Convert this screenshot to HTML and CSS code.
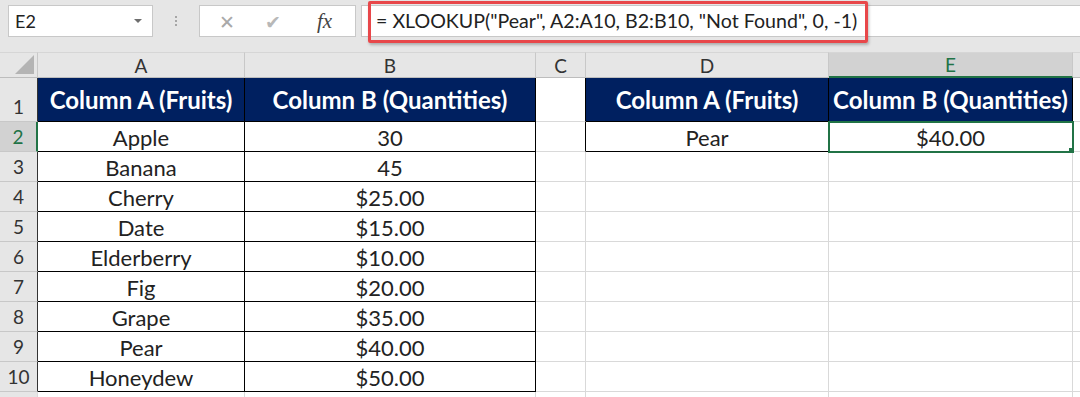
FILE: index.html
```html
<!DOCTYPE html>
<html lang="en">
<head>
  <meta charset="UTF-8" />
  <title>XLOOKUP - Sheet1</title>
  <link rel="stylesheet" href="styles.css">
</head>
<body>

  <div class="formula-bar">
    <div class="name-box">
      <span>E2</span>
      <span class="caret"></span>
    </div>
    <div class="grip"><i></i><i></i><i></i></div>
    <div class="fx-buttons">
      <span class="btn-cancel">&#x2715;</span>
      <span class="btn-enter">&#x2714;</span>
      <span class="btn-fx">fx</span>
    </div>
    <div class="formula-input">
      <div class="formula-text">= XLOOKUP("Pear", A2:A10, B2:B10, "Not Found", 0, -1)</div>
    </div>
  </div>

  <table class="sheet">
    <colgroup>
      <col class="c-hdr"><col class="c-a"><col class="c-b"><col class="c-c"><col class="c-d"><col class="c-e"><col class="c-f">
    </colgroup>
    <tr class="col-heads">
      <th class="corner"><span class="tri"></span></th>
      <th>A</th><th>B</th><th>C</th><th>D</th><th class="sel">E</th><th></th>
    </tr>
    <tr class="r-head">
      <th class="row-num dark">1</th>
      <td class="th-cell">Column A (Fruits)</td>
      <td class="th-cell">Column B (Quantities)</td>
      <td class="gap edge"></td>
      <td class="th-cell">Column A (Fruits)</td>
      <td class="th-cell">Column B (Quantities)</td>
      <td></td>
    </tr>
    <tr>
      <th class="row-num sel">2</th>
      <td class="cell">Apple</td><td class="cell">30</td>
      <td class="gap edge"></td>
      <td class="cell">Pear</td>
      <td class="cell active">$40.00<span class="handle"></span></td>
      <td></td>
    </tr>
    <tr><th class="row-num dark">3</th><td class="cell">Banana</td><td class="cell">45</td><td class="gap"></td><td></td><td></td><td></td></tr>
    <tr><th class="row-num dark">4</th><td class="cell">Cherry</td><td class="cell">$25.00</td><td class="gap"></td><td></td><td></td><td></td></tr>
    <tr><th class="row-num dark">5</th><td class="cell">Date</td><td class="cell">$15.00</td><td class="gap"></td><td></td><td></td><td></td></tr>
    <tr><th class="row-num dark">6</th><td class="cell">Elderberry</td><td class="cell">$10.00</td><td class="gap"></td><td></td><td></td><td></td></tr>
    <tr><th class="row-num dark">7</th><td class="cell">Fig</td><td class="cell">$20.00</td><td class="gap"></td><td></td><td></td><td></td></tr>
    <tr><th class="row-num dark">8</th><td class="cell">Grape</td><td class="cell">$35.00</td><td class="gap"></td><td></td><td></td><td></td></tr>
    <tr><th class="row-num dark">9</th><td class="cell">Pear</td><td class="cell">$40.00</td><td class="gap"></td><td></td><td></td><td></td></tr>
    <tr><th class="row-num dark">10</th><td class="cell">Honeydew</td><td class="cell">$50.00</td><td class="gap"></td><td></td><td></td><td></td></tr>
    <tr><th class="row-num"></th><td></td><td></td><td></td><td></td><td></td><td></td></tr>
  </table>

</body>
</html>
```

FILE: styles.css
```css
html, body { height: 100%; }
body {
  margin: 0;
  background: #fff;
  font-family: Lato, "Noto Sans", sans-serif;
  color: #222;
  overflow: hidden;
}

/* top strip: name box + formula bar */
.formula-bar {
  height: 52px;
  background: #e6e6e6;
  display: flex;
  align-items: flex-start;
  padding: 5px 0 0 8px;
  box-sizing: border-box;
}
.name-box {
  width: 145px; height: 32px;
  background: #fff;
  border: 1px solid #c8c8c8;
  box-sizing: border-box;
  display: flex; align-items: center; justify-content: space-between;
  padding: 0 10px 0 6px;
  font-size: 18px;
}
.caret {
  width: 0; height: 0;
  border-left: 4px solid transparent;
  border-right: 4px solid transparent;
  border-top: 4px solid #6e6e6e;
}
.grip {
  width: 46px; height: 32px;
  display: flex; flex-direction: column; align-items: center; justify-content: center; gap: 2px;
}
.grip i { width: 2px; height: 2px; background: #a6a6a6; display: block; }
.fx-buttons {
  width: 157px; height: 32px;
  background: #fff;
  border: 1px solid #c8c8c8;
  box-sizing: border-box;
  display: flex; align-items: center;
  font-size: 17px;
}
.btn-cancel { color: #a9a9a9; margin-left: 19px; font-size: 19px; }
.btn-enter { color: #b8b8b8; margin-left: 30px; font-size: 19px; }
.btn-fx {
  color: #444; margin-left: 36px;
  font-family: "Liberation Serif", serif; font-style: italic; font-size: 21px;
}
.formula-input {
  flex: 1;
  height: 32px;
  margin-left: 5px;
  background: #fff;
  border: 1px solid #c8c8c8;
  border-right: none;
  box-sizing: border-box;
  position: relative;
}
.formula-text {
  position: absolute;
  left: 6px; top: -5px;
  width: 500px; height: 42px;
  box-sizing: border-box;
  border: 3px solid #e8474a;
  border-radius: 2px;
  box-shadow: 1px 2px 3px rgba(0,0,0,0.25);
  padding-left: 5px;
  line-height: 34px;
  font-size: 19.6px;
  color: #222;
  white-space: nowrap;
}

/* the grid */
.sheet {
  border-collapse: separate;
  border-spacing: 0;
  table-layout: fixed;
  width: 1100px;
}
.c-hdr { width: 38px; }
.c-a { width: 207px; }
.c-b { width: 291px; }
.c-c { width: 50px; }
.c-d { width: 243px; }
.c-e { width: 244px; }
.c-f { width: 27px; }

.sheet td, .sheet th {
  padding: 0;
  border-right: 1px solid #d9d9d9;
  border-bottom: 1px solid #d9d9d9;
  text-align: center;
  overflow: hidden;
  white-space: nowrap;
}
.sheet tr { height: 30px; }
.sheet tr.col-heads { height: 26px; }
.sheet tr.r-head { height: 44px; }

.col-heads th {
  background: #e6e6e6;
  font-weight: normal;
  font-size: 19px;
  color: #333;
  border-right-color: #c8c8c8;
  border-bottom-color: #bdbdbd;
  border-top: 1px solid #d6d6d6;
}
.col-heads th.sel {
  background: #d2d2d2;
  color: #217346;
  border-bottom: 2px solid #217346;
}
.corner { position: relative; }
.tri {
  position: absolute;
  right: 3px; bottom: 3px;
  width: 0; height: 0;
  border-left: 19px solid transparent;
  border-bottom: 19px solid #b4b4b4;
}

.row-num {
  background: #e6e6e6;
  font-weight: normal;
  font-size: 19px;
  color: #333;
  vertical-align: bottom;
  line-height: 28px;
  border-bottom-color: #c8c8c8 !important;
}
.row-num.dark { border-right-color: #333; }
.row-num.sel {
  background: #d2d2d2;
  color: #217346;
  border-right: 2px solid #217346;
}

.th-cell {
  background: #002060;
  color: #fff;
  font-weight: bold;
  font-size: 24px;
  border-right-color: #000 !important;
  border-bottom-color: #000 !important;
}
.cell {
  font-size: 22px;
  color: #222;
  border-right-color: #000 !important;
  border-bottom-color: #000 !important;
  vertical-align: bottom;
  line-height: 27px;
}
.gap { border-right-color: #d9d9d9; }
.gap.edge { border-right-color: #000; }

.active {
  position: relative;
  outline: 2px solid #217346;
  outline-offset: -1px;
}
.handle {
  position: absolute;
  right: -4px; bottom: -4px;
  width: 6px; height: 6px;
  background: #217346;
  border: 1px solid #fff;
}
```
